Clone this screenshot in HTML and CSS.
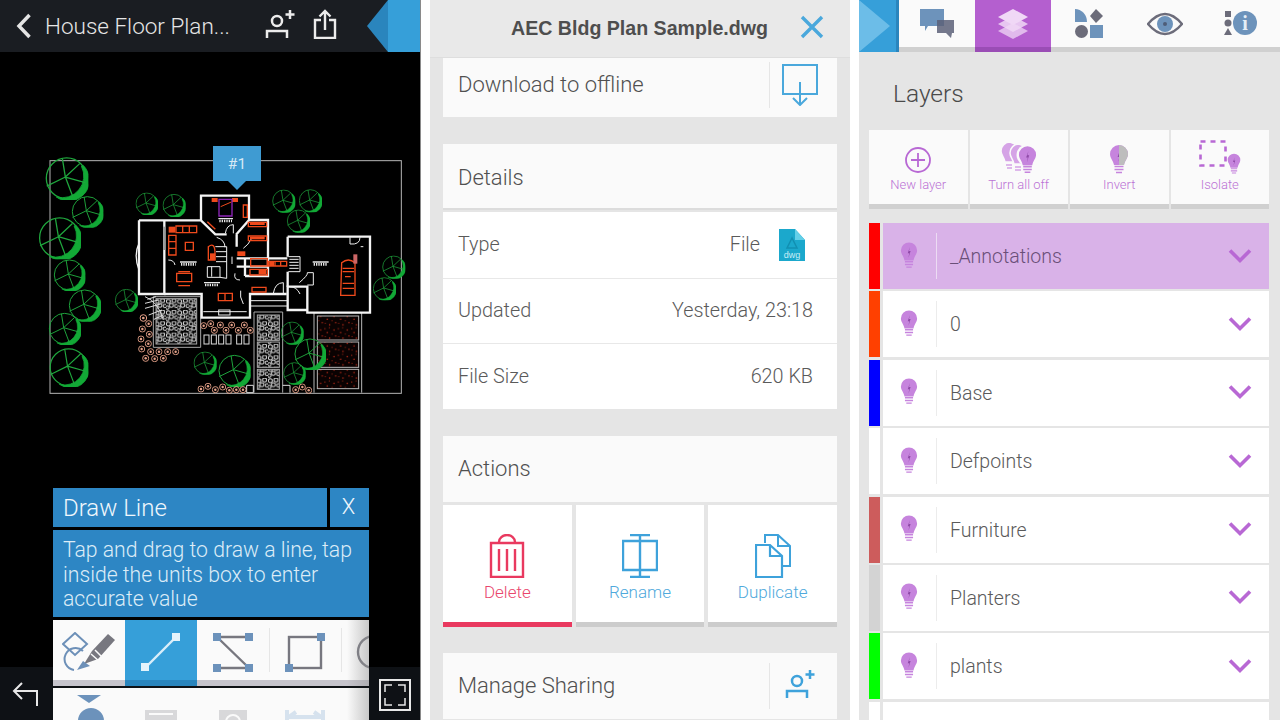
FILE: index.html
```html
<!DOCTYPE html>
<html lang="en">
<head>
<meta charset="utf-8">
<title>AEC Bldg Plan Sample</title>
<link rel="stylesheet" href="styles.css">
</head>
<body>
<svg class="defs" width="0" height="0" aria-hidden="true">
  <defs>
    <symbol id="tree" viewBox="-50 -50 100 100">
      <circle cx="0" cy="0" r="47" fill="none" stroke="#1fa63d" stroke-width="3"/>
      <path d="M38 -30A48 48 0 0 1 -24 43A50 50 0 0 0 34 -28Z" fill="#12a936" stroke="#12a936" stroke-width="2"/>
      <path d="M-3 -3L-46 18M-3 -3L-10 -46M-3 -3L43 10M-3 -3L14 42M-3 -3L30 -34" fill="none" stroke="#1fa63d" stroke-width="3"/>
    </symbol>
    <symbol id="bush" viewBox="0 0 24 24">
      <circle cx="12" cy="12" r="10" fill="none" stroke="#e6a28a" stroke-width="3"/>
      <circle cx="12" cy="12" r="4" fill="#e6a28a"/>
    </symbol>
    <pattern id="gravel" width="34" height="34" patternUnits="userSpaceOnUse">
      <rect width="34" height="34" fill="#050505"/>
      <g fill="none" stroke="#d8d8d8" stroke-width="3">
        <circle cx="7" cy="8" r="6"/><circle cx="24" cy="6" r="6"/><circle cx="16" cy="20" r="6"/><circle cx="31" cy="22" r="5"/><circle cx="4" cy="27" r="5"/>
      </g>
    </pattern>
    <pattern id="speckle" width="40" height="40" patternUnits="userSpaceOnUse">
      <rect width="40" height="40" fill="#0a0202"/>
      <g fill="#c92d18">
        <circle cx="5" cy="6" r="2"/><circle cx="18" cy="3" r="1.6"/><circle cx="32" cy="10" r="2.2"/><circle cx="12" cy="18" r="2.2"/><circle cx="26" cy="22" r="1.6"/><circle cx="37" cy="28" r="2"/><circle cx="6" cy="30" r="1.6"/><circle cx="19" cy="34" r="2.2"/>
      </g>
    </pattern>
    <symbol id="bulb" viewBox="0 0 20 30">
      <path d="M10 1a9 9 0 0 1 9 9c0 4-3 6-4 11H5C4 16 1 14 1 10a9 9 0 0 1 9-9z" fill="#c684dd"/>
      <path d="M11 6L8.600 13h1.700L9.400 18l2.400-7.400H10z" fill="#8f4aa8"/>
      <path d="M5.500 22.500h9M5.500 25.500h9M7 28.500h6" stroke="#c684dd" stroke-width="1.600"/>
    </symbol>
    <symbol id="chev" viewBox="0 0 24 16">
      <path d="M2 2.500L12 12.500L22 2.500" fill="none" stroke="#b868d4" stroke-width="3.600"/>
    </symbol>
    <symbol id="useradd" viewBox="0 0 32 30">
      <circle cx="12" cy="12" r="5" fill="none" stroke="currentColor" stroke-width="2.500"/>
      <path d="M2 29V22H22V29" fill="none" stroke="currentColor" stroke-width="2.500"/>
      <path d="M25 1V10M20.500 5.500H29.500" fill="none" stroke="currentColor" stroke-width="2.500"/>
    </symbol>
  </defs>
</svg>

<main class="screens">
  <!-- Left: drawing viewer -->
  <section class="viewer">
    <header class="viewer-bar">
      <svg class="back" width="16" height="26" viewBox="0 0 16 26"><path d="M13.500 2L3 13L13.500 24" fill="none" stroke="#e4e4e4" stroke-width="3.500"/></svg>
      <h1 class="viewer-title">House Floor Plan...</h1>
      <svg class="bar-user" width="32" height="30"><use href="#useradd"/></svg>
      <svg class="bar-share" width="24" height="30" viewBox="0 0 24 30"><path d="M8 11H2V29H22V11H16M12 21V2M6.500 7.500L12 2L17.500 7.500" fill="none" stroke="#ececec" stroke-width="2.400"/></svg>
      <div class="bar-tab"></div>
    </header>
    <div class="canvas">
      <svg class="plan" width="390" height="270" viewBox="0 0 1170 810">
        <rect x="60" y="62" width="1054" height="698" fill="none" stroke="#b5b5b5" stroke-width="3"/>
        <g>
          <use href="#tree" x="45" y="50" width="130" height="130"/>
          <use href="#tree" x="124" y="167" width="96" height="96"/>
          <use href="#tree" x="25" y="230" width="128" height="128"/>
          <use href="#tree" x="70" y="357" width="96" height="96"/>
          <use href="#tree" x="115" y="447" width="98" height="98"/>
          <use href="#tree" x="55" y="517" width="98" height="98"/>
          <use href="#tree" x="57" y="623" width="118" height="118"/>
          <use href="#tree" x="316" y="157" width="68" height="68"/>
          <use href="#tree" x="397" y="161" width="70" height="70"/>
          <use href="#tree" x="726" y="148" width="70" height="70"/>
          <use href="#tree" x="806" y="147" width="70" height="70"/>
          <use href="#tree" x="770" y="208" width="70" height="70"/>
          <use href="#tree" x="1056" y="346" width="70" height="70"/>
          <use href="#tree" x="1028" y="411" width="70" height="70"/>
          <use href="#tree" x="254" y="446" width="70" height="70"/>
        </g>
        <g fill="url(#gravel)" stroke="#a8a8a8" stroke-width="3">
          <path d="M370 470H512V622H370Z" fill="none"/>
          <rect x="378" y="476" width="122" height="136"/>
          <rect x="682" y="525" width="66" height="76"/>
          <rect x="682" y="606" width="66" height="76"/>
          <rect x="682" y="688" width="66" height="60"/>
          <path d="M672 516V758M758 516V758M672 516H758" fill="none"/>
        </g>
        <g stroke="#b8b8b8" stroke-width="3" fill="url(#speckle)">
          <rect x="862" y="528" width="124" height="72"/>
          <rect x="862" y="606" width="124" height="76"/>
          <rect x="862" y="688" width="124" height="58"/>
          <path d="M852 518V758M995 518V758M852 518H995" fill="none"/>
        </g>
        <g>
          <use href="#tree" x="751" y="544" width="70" height="70"/>
          <use href="#tree" x="792" y="594" width="96" height="96"/>
          <use href="#tree" x="759" y="666" width="68" height="68"/>
          <use href="#tree" x="490" y="634" width="70" height="70"/>
          <use href="#tree" x="564" y="643" width="98" height="98"/>
        </g>
        <g fill="none" stroke="#dcdcdc" stroke-width="3">
          <rect x="522" y="585" width="15" height="27"/><rect x="544" y="585" width="15" height="27"/><rect x="566" y="585" width="15" height="27"/><rect x="588" y="585" width="15" height="27"/><rect x="620" y="585" width="15" height="27"/><rect x="642" y="585" width="15" height="27"/>
          <path d="M345 470Q385 485 400 540M352 478L378 470M345 490L385 480M345 505L392 492M356 525L396 510M372 538L400 525"/>
          <path d="M650 736H670V758H650ZM758 736H780V758"/>
        </g>
        <g>
          <use href="#bush" x="328" y="522" width="24" height="24"/><use href="#bush" x="345" y="540" width="22" height="22"/><use href="#bush" x="326" y="556" width="22" height="22"/><use href="#bush" x="347" y="572" width="22" height="22"/><use href="#bush" x="322" y="586" width="22" height="22"/><use href="#bush" x="344" y="600" width="22" height="22"/><use href="#bush" x="324" y="616" width="22" height="22"/><use href="#bush" x="351" y="624" width="22" height="22"/><use href="#bush" x="376" y="624" width="22" height="22"/><use href="#bush" x="402" y="624" width="22" height="22"/><use href="#bush" x="426" y="624" width="22" height="22"/><use href="#bush" x="336" y="644" width="22" height="22"/><use href="#bush" x="363" y="645" width="22" height="22"/><use href="#bush" x="389" y="644" width="22" height="22"/>
          <use href="#bush" x="510" y="546" width="22" height="22"/><use href="#bush" x="531" y="540" width="22" height="22"/><use href="#bush" x="542" y="560" width="22" height="22"/><use href="#bush" x="560" y="544" width="22" height="22"/><use href="#bush" x="577" y="560" width="22" height="22"/><use href="#bush" x="594" y="544" width="22" height="22"/><use href="#bush" x="614" y="560" width="22" height="22"/><use href="#bush" x="632" y="544" width="22" height="22"/><use href="#bush" x="650" y="560" width="22" height="22"/>
          <use href="#bush" x="502" y="736" width="22" height="22"/><use href="#bush" x="523" y="728" width="22" height="22"/><use href="#bush" x="545" y="738" width="22" height="22"/><use href="#bush" x="567" y="730" width="22" height="22"/><use href="#bush" x="587" y="740" width="22" height="22"/><use href="#bush" x="608" y="738" width="22" height="22"/><use href="#bush" x="628" y="738" width="22" height="22"/><use href="#bush" x="786" y="738" width="22" height="22"/><use href="#bush" x="806" y="730" width="22" height="22"/><use href="#bush" x="825" y="740" width="22" height="22"/>
        </g>
        <g fill="none" stroke="#f4f4f4" stroke-width="7">
          <path d="M513 240V167H657V240L618 284"/>
          <path d="M657 240H714V408H645"/>
          <path d="M327 241H513L556 283H590"/>
          <path d="M327 241V462H403V241"/>
          <path d="M403 462H515V533H660V462H770"/>
          <path d="M773 290H1020V518H832V440H773V510H832"/>
          <path d="M714 355H772M773 290V350M773 395V440"/>
          <path d="M620 284V320M620 355H714M620 380H714M645 355V408"/>
          <path d="M327 310Q310 345 327 390" stroke-width="4"/>
        </g>
        <path d="M403 260V330" stroke="#9a9a9a" stroke-width="7" fill="none"/>
        <g fill="none" stroke="#f0f0f0" stroke-width="3">
          <path d="M556 320H590V415L570 412V380H532V412H570M558 335H590M558 350H590M558 365H590M545 380V410"/>
          <path d="M560 292Q585 300 585 322M610 280V254Q590 254 586 280"/>
          <path d="M435 375Q432 360 415 360M640 325Q655 315 665 295M606 350V372M615 400Q610 420 630 420"/>
          <path d="M640 492Q628 470 632 452M730 460Q735 428 760 428V460M780 440Q800 440 810 462M808 428Q835 405 832 398H850V435H832M960 292V312Q990 315 990 292M992 320H1000"/>
          <path d="M775 350H810V395H775M778 358H806M778 367H806M778 376H806M778 385H806"/>
          <path d="M520 515H650"/>
          <rect x="566" y="510" width="34" height="15"/>
          <path d="M662 482H772M662 498H772"/>
        </g>
        <g fill="none" stroke="#e6e6e6">
          <path d="M565 236H609M450 366H500M522 428H570M848 366H896" stroke-width="4"/>
          <path d="M568 243H606M453 373H497M525 435H567M851 373H893" stroke-width="8" stroke-dasharray="4 3"/>
        </g>
        <g fill="none" stroke="#ef4a1c" stroke-width="4">
          <path d="M438 258H500V278H438ZM458 258V278M478 258V278M416 286H438V345H416ZM416 305H438M416 325H438M466 307H490V331H466Z"/>
          <path d="M445 395H480M445 437H480M440 400H485V425H440Z"/>
          <path d="M532 245L556 268M640 195H652V232H640ZM535 320Q555 305 555 340V360H535Z"/>
          <path d="M655 247H710V260H655ZM655 288H710V302H655ZM662 356H712V378H662ZM660 388H712V405H660Z"/>
          <path d="M716 364H770V378H716ZM735 364V378M752 364V378M565 460H607V482H565ZM585 460V482M666 442H708V456H666Z"/>
          <path d="M935 368Q955 352 975 368V466H932ZM938 385H972M938 395H972M938 430H972M938 445H972M945 410H962"/>
        </g>
        <g fill="#ef4a1c">
          <rect x="416" y="260" width="20" height="18"/><rect x="622" y="334" width="24" height="14"/><rect x="545" y="174" width="18" height="12"/><rect x="606" y="174" width="18" height="12"/><rect x="540" y="340" width="16" height="20"/><rect x="718" y="364" width="14" height="14"/><rect x="686" y="390" width="22" height="12"/><rect x="660" y="247" width="44" height="8"/><rect x="660" y="290" width="44" height="8"/>
        </g>
        <rect x="970" y="343" width="12" height="28" fill="#c66"/>
        <path d="M567 178H606V228H567Z" fill="none" stroke="#8e26b8" stroke-width="4"/>
        <path d="M572 200L604 186" stroke="#ef4a1c" stroke-width="3"/>
      </svg>
      <div class="pin">#1</div>
    </div>
    <footer class="viewer-foot">
      <svg width="26" height="26" viewBox="0 0 26 26"><path d="M25 25V10H2M10 2L2 10L10 18" fill="none" stroke="#e8e8e8" stroke-width="2"/></svg>
      <svg class="full" width="32" height="32" viewBox="0 0 32 32"><rect x="1" y="1" width="30" height="30" fill="none" stroke="#e8e8e8" stroke-width="2"/><path d="M6 13V6H13M19 6H26V13M26 19V26H19M13 26H6V19" fill="none" stroke="#e8e8e8" stroke-width="1.500"/></svg>
    </footer>
    <aside class="draw">
      <div class="draw-head">
        <span class="draw-name">Draw Line</span>
        <span class="draw-close">X</span>
      </div>
      <p class="draw-help">Tap and drag to draw a line, tap inside the units box to enter accurate value</p>
      <div class="tools">
        <div class="tool">
          <svg width="54" height="40" viewBox="0 0 54 40"><g fill="none" stroke="#6d90b8" stroke-width="2"><path d="M1 12L13 1L25 12L13 23Z"/><path d="M21 19A11 11 0 1 0 12 38"/></g><path d="M22 32L30 19L46 2L53 8L36 27Z" fill="#77777f"/><path d="M15 38L21 29L28 34Z" fill="#6d90b8"/><path d="M29 22L37 29M33 18L40 25" stroke="#fafafa" stroke-width="1.500"/></svg>
        </div>
        <div class="tool tool-on">
          <svg width="40" height="40" viewBox="0 0 40 40"><path d="M6 34L34 6" stroke="#d9eefa" stroke-width="2.400"/><rect x="0" y="31" width="8" height="8" fill="#e4f3fb"/><rect x="31" y="1" width="8" height="8" fill="#e4f3fb"/></svg>
        </div>
        <div class="tool">
          <svg width="40" height="39" viewBox="0 0 40 39"><path d="M4 4H36M4 4L36 35M4 35H36" stroke="#77777f" stroke-width="2.400"/><g fill="#6c92bb"><rect y="0" width="8" height="8"/><rect x="32" y="0" width="8" height="8"/><rect y="31" width="8" height="8"/><rect x="32" y="31" width="8" height="8"/></g></svg>
        </div>
        <div class="tool">
          <svg width="40" height="39" viewBox="0 0 40 39"><rect x="4" y="4" width="32" height="31" fill="none" stroke="#77777f" stroke-width="2.400"/><rect x="32" width="8" height="8" fill="#6c92bb"/><rect y="31" width="8" height="8" fill="#6c92bb"/></svg>
        </div>
        <div class="tool">
          <svg width="28" height="40" viewBox="0 0 28 40"><circle cx="33" cy="20" r="16" fill="none" stroke="#77777f" stroke-width="2.400"/></svg>
        </div>
      </div>
      <div class="tools tools-next">
        <div class="tool">
          <svg width="40" height="32" viewBox="0 0 40 32"><path d="M8 7H32L20 15Z" fill="#6c92bb"/><circle cx="22" cy="33" r="13" fill="#6c92bb"/></svg>
        </div>
        <div class="tool tool-dim">
          <svg width="32" height="10" viewBox="0 0 32 10"><rect width="32" height="10" fill="#d8d8da"/><rect x="4" y="3" width="24" height="2" fill="#fafafa"/></svg>
        </div>
        <div class="tool tool-dim">
          <svg width="28" height="10" viewBox="0 0 28 10"><rect width="28" height="10" fill="#d8d8da"/><circle cx="14" cy="12" r="7" fill="none" stroke="#fafafa" stroke-width="2"/></svg>
        </div>
        <div class="tool tool-dim">
          <svg width="42" height="10" viewBox="0 0 42 10"><path d="M3 0V10M39 0V10M5 7H37M5 7L12 2M37 7L30 2" stroke="#d6e2ee" stroke-width="4" fill="none"/></svg>
        </div>
      </div>
    </aside>
  </section>

  <!-- Middle: file details -->
  <section class="details">
    <header class="details-bar">
      <h2 class="details-title">AEC Bldg Plan Sample.dwg</h2>
      <svg class="close" width="24" height="24" viewBox="0 0 24 24"><path d="M2 2L22 22M22 2L2 22" stroke="#4aa8dc" stroke-width="3.400"/></svg>
    </header>
    <div class="card-row card-top">
      <span class="card-label">Download to offline</span>
      <span class="card-icon">
        <svg width="36" height="42" viewBox="0 0 36 42"><path d="M1 30V1H35V30ZM18 18V41M11 34L18 41L25 34" fill="none" stroke="#4aa8dc" stroke-width="2"/></svg>
      </span>
    </div>
    <div class="group group-details">
      <div class="group-head">Details</div>
      <div class="facts">
        <div class="fact"><span>Type</span><span class="fact-file">File
          <svg width="26" height="32" viewBox="0 0 26 32"><path d="M0 0H16L26 11V32H0Z" fill="#1ba8cc"/><path d="M16 0L26 11H16Z" fill="#63cfe8"/><path d="M13 9L8 19H18Z" fill="none" stroke="#1290b2" stroke-width="1.500"/><text x="13" y="29" class="dwg">dwg</text></svg>
        </span></div>
        <div class="fact"><span>Updated</span><span>Yesterday, 23:18</span></div>
        <div class="fact"><span>File Size</span><span>620 KB</span></div>
      </div>
    </div>
    <div class="group group-actions">
      <div class="group-head">Actions</div>
      <div class="actions">
        <div class="action action-red">
          <svg width="36" height="44" viewBox="0 0 36 44"><path d="M2 9H34V43H2ZM10 9V8A8 7 0 0 1 26 8V9M10 15V37M18 15V37M26 15V37" fill="none" stroke="#e9395f" stroke-width="2.400"/></svg>
          <span>Delete</span>
        </div>
        <div class="action">
          <svg width="36" height="44" viewBox="0 0 36 44"><path d="M1 7H35V36H1ZM18 1V43M8 1H28M8 43H28" fill="none" stroke="#3ea2db" stroke-width="2.400"/></svg>
          <span>Rename</span>
        </div>
        <div class="action">
          <svg width="36" height="44" viewBox="0 0 36 44"><path d="M10 9V1H23L35 12V32H27M23 1V12H35" fill="none" stroke="#3ea2db" stroke-width="2"/><path d="M1 11H15L27 22V43H1ZM15 11V22H27" fill="#fff" stroke="#3ea2db" stroke-width="2.200"/></svg>
          <span>Duplicate</span>
        </div>
      </div>
    </div>
    <div class="card-row card-share">
      <span class="card-label">Manage Sharing</span>
      <span class="card-icon">
        <svg class="share-icon" width="32" height="30"><use href="#useradd"/></svg>
      </span>
    </div>
  </section>

  <!-- Right: layers -->
  <section class="layers">
    <nav class="tabs">
      <div class="tab-toggle"></div>
      <div class="tab">
        <svg width="36" height="30" viewBox="0 0 36 30"><path d="M1 0H25V17H9L6 22V17H1Z" fill="#6d93bb"/><path d="M18 11H35V24H33L32 29L27 24H18Z" fill="#5c6078" opacity=".85"/></svg>
      </div>
      <div class="tab tab-on">
        <svg width="34" height="32" viewBox="0 0 34 32"><g fill="#f0d8f6"><path d="M17 1L32 9L17 17L2 9Z"/><path d="M17 8L32 16L17 24L2 16Z" opacity=".85"/><path d="M17 15L32 23L17 31L2 23Z" opacity=".75"/></g></svg>
      </div>
      <div class="tab">
        <svg width="28" height="30" viewBox="0 0 28 30"><path d="M0 0A12 13 0 0 1 12 13V13H0Z" fill="#6d93bb"/><path d="M21 0L28 7L21 14L15 7Z" fill="#6c6c7a"/><circle cx="6.500" cy="22.500" r="6.500" fill="#6c6c7a"/><rect x="15" y="16" width="13" height="13" fill="#6d93bb"/></svg>
      </div>
      <div class="tab">
        <svg width="36" height="24" viewBox="0 0 36 24"><path d="M1 12Q18 -8 35 12Q18 32 1 12Z" fill="none" stroke="#6c6c7a" stroke-width="2.400"/><circle cx="18" cy="12" r="8" fill="#6d93bb"/><circle cx="18" cy="12" r="2" fill="#4e5e78"/></svg>
      </div>
      <div class="tab">
        <svg width="34" height="28" viewBox="0 0 34 28"><rect x="1" y="1" width="6" height="6" fill="#6c6c7a"/><circle cx="4" cy="13" r="3.500" fill="#6c6c7a"/><path d="M4 18L8 25H0Z" fill="#6c6c7a"/><circle cx="21" cy="13" r="12" fill="#6d93bb"/><text x="21" y="20" class="info">i</text></svg>
      </div>
    </nav>
    <h2 class="layers-title">Layers</h2>
    <div class="layer-actions">
      <div class="layer-action">
        <svg width="28" height="28" viewBox="0 0 28 28"><circle cx="14" cy="14" r="12" fill="none" stroke="#b868d4" stroke-width="1.800"/><path d="M14 7V21M7 14H21" stroke="#b868d4" stroke-width="1.800"/></svg>
        <span>New layer</span>
      </div>
      <div class="layer-action">
        <svg width="36" height="32" viewBox="0 0 36 32"><g fill="#d5a3e6" stroke="#fafafa" stroke-width="1.500"><path d="M9 0a9 9 0 0 0-9 9c0 4 3 6 4 11h10V2z"/><path d="M18 2a9 9 0 0 0-9 9c0 4 3 6 4 11h10V4z"/></g><path d="M5 23h6M14 25h6M6 26h5M14 28h6" stroke="#d5a3e6" stroke-width="1.400"/><circle cx="26" cy="13" r="10.500" fill="#fafafa"/><use href="#bulb" x="17" y="3" width="19" height="29"/></svg>
        <span>Turn all off</span>
      </div>
      <div class="layer-action">
        <svg width="20" height="30" viewBox="0 0 20 30"><use href="#bulb" width="20" height="30"/><path d="M10 1a9 9 0 0 1 9 9c0 4-3 6-4 11H10z" fill="#bdbdbd"/></svg>
        <span>Invert</span>
      </div>
      <div class="layer-action">
        <svg width="42" height="34" viewBox="0 0 42 34"><rect x="1.500" y="1.500" width="25" height="24" fill="none" stroke="#b868d4" stroke-width="2.600" stroke-dasharray="5 5"/><use href="#bulb" x="28" y="13" width="14" height="21"/></svg>
        <span>Isolate</span>
      </div>
    </div>
    <ul class="layer-list">
      <li class="layer layer-on"><i class="swatch swatch-red"></i><div class="layer-body"><svg class="layer-bulb" width="18" height="28"><use href="#bulb"/></svg><span class="layer-name">_Annotations</span><svg class="layer-chev" width="24" height="16"><use href="#chev"/></svg></div></li>
      <li class="layer"><i class="swatch swatch-orange"></i><div class="layer-body"><svg class="layer-bulb" width="18" height="28"><use href="#bulb"/></svg><span class="layer-name">0</span><svg class="layer-chev" width="24" height="16"><use href="#chev"/></svg></div></li>
      <li class="layer"><i class="swatch swatch-blue"></i><div class="layer-body"><svg class="layer-bulb" width="18" height="28"><use href="#bulb"/></svg><span class="layer-name">Base</span><svg class="layer-chev" width="24" height="16"><use href="#chev"/></svg></div></li>
      <li class="layer"><i class="swatch swatch-white"></i><div class="layer-body"><svg class="layer-bulb" width="18" height="28"><use href="#bulb"/></svg><span class="layer-name">Defpoints</span><svg class="layer-chev" width="24" height="16"><use href="#chev"/></svg></div></li>
      <li class="layer"><i class="swatch swatch-rose"></i><div class="layer-body"><svg class="layer-bulb" width="18" height="28"><use href="#bulb"/></svg><span class="layer-name">Furniture</span><svg class="layer-chev" width="24" height="16"><use href="#chev"/></svg></div></li>
      <li class="layer"><i class="swatch swatch-grey"></i><div class="layer-body"><svg class="layer-bulb" width="18" height="28"><use href="#bulb"/></svg><span class="layer-name">Planters</span><svg class="layer-chev" width="24" height="16"><use href="#chev"/></svg></div></li>
      <li class="layer"><i class="swatch swatch-green"></i><div class="layer-body"><svg class="layer-bulb" width="18" height="28"><use href="#bulb"/></svg><span class="layer-name">plants</span><svg class="layer-chev" width="24" height="16"><use href="#chev"/></svg></div></li>
      <li class="layer"><i class="swatch swatch-white"></i><div class="layer-body"></div></li>
    </ul>
  </section>
</main>
</body>
</html>
```

FILE: styles.css
```css
* { box-sizing: border-box; }
html, body { margin: 0; height: 100%; overflow: hidden; background: #fff; }
body { font-family: Roboto, "Liberation Sans", sans-serif; font-weight: 300; color: #4c4c4c; }
h1, h2, p, ul { margin: 0; padding: 0; }
svg { display: block; flex: none; }
.defs { position: absolute; }

.screens { display: grid; grid-template-columns: 421px 420px 421px; column-gap: 9px; width: 1280px; height: 720px; }

/* Left */
.viewer { position: relative; display: flex; flex-direction: column; height: 720px; overflow: hidden; background: #000; border-right: 1px solid #8a8a8a; }
.viewer-bar { display: flex; align-items: center; height: 52px; flex: none; padding-left: 16px; background: #1a1d22; color: #ececec; }
.viewer-title { width: 220px; margin-left: 13px; font-size: 22.500px; font-weight: 300; white-space: nowrap; color: #e6e6e6; }
.bar-user { color: #ececec; margin-top: -4px; }
.bar-share { margin-left: 16px; margin-top: -5px; }
.bar-tab { margin-left: auto; width: 53px; height: 52px; background: linear-gradient(90deg, #2a85bd 0, #2a85bd 21px, #369fd9 21px); clip-path: polygon(0 50%, 21px 0, 100% 0, 100% 100%, 21px 100%); }
.canvas { position: relative; flex: 1; }
.plan { position: absolute; left: 30px; top: 88px; }
.pin { position: absolute; left: 213px; top: 94px; width: 48px; height: 35px; padding-top: 9px; background: #3f9bd2; color: #d6e9f5; font-size: 15.500px; font-weight: 400; text-align: center; }
.pin::after { content: ""; position: absolute; left: 15px; top: 35px; border: 9px solid transparent; border-top-color: #3f9bd2; border-bottom: 0; }
.viewer-foot { display: flex; justify-content: space-between; align-items: center; height: 53px; flex: none; padding: 0 9px 0 12px; background: #0e1115; }
.full { margin-top: 2px; }

.draw { position: absolute; left: 53px; top: 488px; width: 316px; }
.draw-head { display: flex; gap: 3px; height: 39px; }
.draw-name { flex: 1; padding-left: 10px; background: #2d86c4; color: #f0f7fc; font-size: 24px; font-weight: 300; line-height: 41px; }
.draw-close { width: 39px; padding-right: 2px; background: #2d86c4; color: #f0f7fc; font-size: 22px; text-align: center; line-height: 38px; }
.draw-help { height: 87px; margin-top: 3px; padding: 8px 6px 0 10px; background: #2d86c4; color: #dcecf7; font-size: 21.200px; line-height: 24.500px; }
.tools { position: relative; display: grid; grid-template-columns: repeat(4, 72px) 28px; height: 66px; margin-top: 3px; background: #fafafa; border-bottom: 6px solid #c6c4cc; }
.tools::after { content: ""; position: absolute; right: 0; top: 0; bottom: -6px; width: 22px; background: linear-gradient(90deg, rgba(255,255,255,0), rgba(150,150,150,.5)); }
.tools-next { height: 32px; margin-top: 2px; border-bottom: 0; overflow: hidden; }
.tool { display: flex; align-items: center; justify-content: center; height: 60px; padding-top: 4px; overflow: hidden; }
.tool + .tool { background: linear-gradient(#e6e6e6, #e6e6e6) left center / 1px 44px no-repeat; }
.tool-on { position: relative; background: #369fd9 !important; overflow: visible; }
.tool-on::after { content: ""; position: absolute; left: 0; right: 0; top: 60px; height: 6px; background: #2a85bd; }
.tool-on + .tool { background: none; }
.tools-next .tool { height: 32px; align-items: flex-start; padding-top: 0; background: none; }
.tools-next .tool-dim { padding-top: 22px; }

/* Middle */
.details { height: 720px; overflow: hidden; background: #e5e5e5; }
.details-bar { position: relative; display: flex; align-items: center; height: 58px; background: #e9e9e9; border-bottom: 1px solid #dedede; }
.details-title { width: 100%; padding-left: 81px; font-family: "Liberation Sans", Arial, sans-serif; font-size: 19.600px; font-weight: 700; color: #4e4e4e; }
.close { position: absolute; left: 370px; top: 15px; }
.card-row { display: flex; align-items: center; margin: 0 13px; background: #fafafa; }
.card-top { height: 59px; }
.card-top .card-label { margin-top: -6px; }
.card-share { height: 66px; margin-top: 26px; }
.card-label { flex: 1; padding-left: 15px; font-size: 22px; color: #505050; }
.card-icon { display: flex; width: 68px; height: 46px; padding-left: 12px; border-left: 1px solid #e6e6e6; }
.card-top .card-icon { margin-top: -6px; }
.card-top .card-icon svg { margin-top: 2px; }
.share-icon { color: #3ea2db; margin: 6px 0 0 3px; }
.group { margin: 26px 13px 0; }
.group-head { height: 66px; padding-left: 15px; background: #fafafa; font-size: 22px; line-height: 67px; color: #505050; }
.group-details { margin-top: 27px; }
.group-details .group-head { border-bottom: 2px solid #dcdcdc; }
.facts { margin-top: 2px; background: #fff; }
.fact { display: flex; align-items: center; justify-content: space-between; height: 65.500px; padding: 0 24px 0 15px; border-top: 1px solid #e8e8e8; font-size: 19.800px; color: #5a5a5a; }
.fact:first-child { border-top: 0; }
.fact-file { display: flex; align-items: center; gap: 19px; margin-right: 8px; }
.dwg { font-family: "Liberation Sans", sans-serif; font-size: 9px; fill: #c8eef7; text-anchor: middle; }
.group-actions { margin-top: 27px; }
.group-actions .group-head { line-height: 65px; }
.actions { display: grid; grid-template-columns: repeat(3, 1fr); gap: 4px; margin-top: 3px; }
.action { display: flex; flex-direction: column; align-items: center; height: 122px; padding-top: 29px; background: #fff; border-bottom: 5px solid #cccccc; color: #4fa9dc; font-size: 17px; }
.action span { margin-top: 4px; }
.action-red { border-bottom-color: #e9395f; color: #e9466c; }

/* Right */
.layers { height: 720px; overflow: hidden; background: #e5e5e5; }
.tabs { display: grid; grid-template-columns: 40px repeat(5, 76px); height: 52px; background: #fafafa; border-bottom: 5px solid #d0d0d0; }
.tab-toggle { height: 52px; background: linear-gradient(90deg, #369fd9 0, #369fd9 37px, #2a85bd 37px); position: relative; overflow: hidden; }
.tab-toggle::after { content: ""; position: absolute; left: 0; top: 0; border-style: solid; border-width: 26px 0 26px 31px; border-color: transparent transparent transparent #6cbde8; }
.tab { display: flex; align-items: center; justify-content: center; height: 47px; }
.tab-on { height: 52px; background: #b45fcf; border-bottom: 5px solid #9a4db5; }
.layers-title { margin: 27px 0 0 34px; height: 51px; font-size: 24.500px; font-weight: 300; color: #4a4a4a; }
.layer-actions { display: grid; grid-template-columns: repeat(4, 98.500px); column-gap: 2px; margin-left: 10px; }
.layer-action { display: flex; flex-direction: column; align-items: center; justify-content: flex-end; height: 79px; padding-bottom: 12px; background: #fafafa; border-bottom: 5px solid #d0d0d0; color: #bb72d5; font-size: 13px; }
.layer-action span { margin-top: 3px; }
.layer-list { display: flex; flex-direction: column; gap: 2.400px; margin: 14px 11px 0 10px; list-style: none; }
.layer { display: flex; gap: 3px; height: 66px; flex: none; }
.swatch { width: 11px; }
.swatch-red { background: #ff0000; }
.swatch-orange { background: #ff4000; }
.swatch-blue { background: #0000ff; }
.swatch-white { background: #ffffff; }
.swatch-rose { background: #cd5c5c; }
.swatch-grey { background: #d3d3d3; }
.swatch-green { background: #00ff00; }
.layer-body { display: flex; align-items: center; flex: 1; padding-left: 17px; background: #fff; }
.layer-on .layer-body { background: #d9b2e8; }
.layer-bulb { margin-top: -3px; }
.layer-name { flex: 1; height: 46px; margin-left: 18px; padding-left: 13px; border-left: 1px solid #ececec; font-size: 19.500px; line-height: 48px; color: #5a5a5a; }
.layer-on .layer-name { border-left-color: #ecdcf3; color: #6a4f78; }
.layer-chev { margin-right: 17px; margin-top: -1px; }

text.info { font-family: "Liberation Serif", serif; font-size: 20px; font-weight: 700; fill: #e6eef6; text-anchor: middle; }
```
